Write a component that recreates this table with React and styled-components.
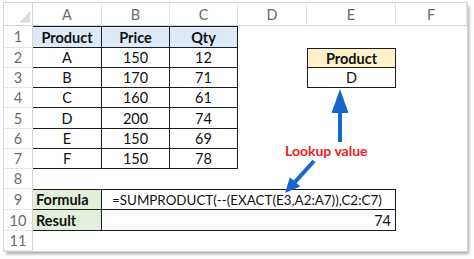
import React from 'react';
import styled, { createGlobalStyle } from 'styled-components';

const GlobalStyle = createGlobalStyle`
  html, body {
    margin: 0;
    padding: 0;
    background: #ffffff;
  }
  body {
    font-family: Lato, "Open Sans", "Liberation Sans", sans-serif;
  }
`;

const INK = '#1c1c1c';
const HEAD_LINE = '#d4d4d4';

const cols = ['A', 'B', 'C', 'D', 'E', 'F'];
const rowHeights = [22, 20, 20, 20, 21, 20, 20, 20, 21, 21, 20];

// each row: list of cells after the row number; span merges columns
const rows = [
  [
    { t: 'Product', bold: true, bg: '#dde9f6', b: 'trb' },
    { t: 'Price', bold: true, bg: '#dde9f6', b: 'trb' },
    { t: 'Qty', bold: true, bg: '#dde9f6', b: 'trb' },
    {}, {}, {},
  ],
  [{ t: 'A', b: 'rb' }, { t: '150', b: 'rb' }, { t: '12', b: 'rb' }, {}, { t: 'Product', bold: true, bg: '#fff0c9', b: 'trbl' }, {}],
  [{ t: 'B', b: 'rb' }, { t: '170', b: 'rb' }, { t: '71', b: 'rb' }, {}, { t: 'D', b: 'rbl' }, {}],
  [{ t: 'C', b: 'rb' }, { t: '160', b: 'rb' }, { t: '61', b: 'rb' }, {}, {}, {}],
  [{ t: 'D', b: 'rb' }, { t: '200', b: 'rb' }, { t: '74', b: 'rb' }, {}, {}, {}],
  [{ t: 'E', b: 'rb' }, { t: '150', b: 'rb' }, { t: '69', b: 'rb' }, {}, {}, {}],
  [{ t: 'F', b: 'rb' }, { t: '150', b: 'rb' }, { t: '78', b: 'rb' }, {}, {}, {}],
  [{}, {}, {}, {}, {}, {}],
  [
    { t: 'Formula', bold: true, bg: '#e2efda', b: 'trb', align: 'left' },
    { t: '=SUMPRODUCT(--(EXACT(E3,A2:A7)),C2:C7)', span: 4, b: 'trb', align: 'left', pad: 10, size: 13.4 },
    {},
  ],
  [
    { t: 'Result', bold: true, bg: '#e2efda', b: 'rb', align: 'left' },
    { t: '74', span: 4, b: 'rb', align: 'right' },
    {},
  ],
  [{}, {}, {}, {}, {}, {}],
];

export default function App() {
  return (
    <>
      <GlobalStyle />
      <Page>
        <Sheet>
          <Corner>
            <svg width="29" height="23" viewBox="0 0 29 23">
              <polygon points="27,8 27,20 16,20" fill="#dcdcdc" />
            </svg>
          </Corner>
          {cols.map(c => (
            <ColHead key={c}>{c}</ColHead>
          ))}
          {rows.map((cells, r) => (
            <React.Fragment key={`row-${r}`}>
              <RowHead>{r + 1}</RowHead>
              {cells.map((cell, i) => (
                <Cell
                  key={`c-${r}-${i}`}
                  $bg={cell.bg}
                  $bold={cell.bold}
                  $align={cell.align}
                  $b={cell.b || ''}
                  $span={cell.span}
                  $pad={cell.pad}
                  $size={cell.size}
                >
                  {cell.t}
                </Cell>
              ))}
            </React.Fragment>
          ))}
        </Sheet>

        <Note>Lookup value</Note>

        <Arrows width="474" height="259" viewBox="0 0 474 259">
          <polygon
            points="338,142 342,142 342,113 348.5,113 340,89 331.5,113 338,113"
            fill="#1766cc"
          />
          <polygon
            points="315.5,162.3 296.6,183.2 300.3,186.6 285,193 289.9,177.2 293.6,180.6 312.5,159.7"
            fill="#1766cc"
          />
        </Arrows>
      </Page>
    </>
  );
}

const Page = styled.div`
  position: relative;
  width: 474px;
  height: 259px;
  padding: 3px 0 0 4px;
  box-sizing: border-box;
  overflow: hidden;
`;

const Sheet = styled.div`
  display: grid;
  grid-template-columns: 29px 69px 68px 68px 69px 89px 71px;
  grid-template-rows: 23px ${rowHeights.map(h => `${h}px`).join(' ')};
  width: 463px;
  background: #ffffff;
  box-shadow: 0 0 0 1px #d6d6d6, 2px 3px 3px rgba(0, 0, 0, 0.35);
  font-size: 14.5px;
  color: #111;
`;

const Corner = styled.div`
  border-right: 1px solid ${HEAD_LINE};
  border-bottom: 1px solid ${HEAD_LINE};
  box-sizing: border-box;
  display: flex;
`;

const ColHead = styled.div`
  display: flex;
  align-items: center;
  justify-content: center;
  border-right: 1px solid #e2e2e2;
  border-bottom: 1px solid ${HEAD_LINE};
  box-sizing: border-box;
  color: #6b6b6b;
  font-size: 14.5px;
`;

const RowHead = styled.div`
  display: flex;
  align-items: center;
  justify-content: center;
  border-right: 1px solid ${HEAD_LINE};
  border-bottom: 1px solid #e6e6e6;
  box-sizing: border-box;
  color: #6b6b6b;
  font-size: 14.5px;
`;

const edge = side => props =>
  props.$b.includes(side) ? `1px solid ${INK}` : 'none';

const Cell = styled.div`
  display: flex;
  align-items: center;
  justify-content: ${props =>
    props.$align === 'left' ? 'flex-start' : props.$align === 'right' ? 'flex-end' : 'center'};
  grid-column: ${props => (props.$span ? `span ${props.$span}` : 'auto')};
  padding: 0 ${props => (props.$align === 'right' ? 4 : 0)}px 0
    ${props => (props.$align === 'left' ? props.$pad || 3 : 0)}px;
  background: ${props => props.$bg || 'transparent'};
  font-weight: ${props => (props.$bold ? 700 : 400)};
  font-size: ${props => (props.$size ? `${props.$size}px` : 'inherit')};
  border-top: ${edge('t')};
  border-right: ${edge('r')};
  border-bottom: ${edge('b')};
  border-left: ${edge('l')};
  box-sizing: border-box;
  white-space: nowrap;
  overflow: visible;
`;

const Note = styled.div`
  position: absolute;
  left: 285px;
  top: 142px;
  color: #ec1c24;
  font-weight: 700;
  font-size: 14px;
  white-space: nowrap;
`;

const Arrows = styled.svg`
  position: absolute;
  left: 0;
  top: 0;
  pointer-events: none;
`;
